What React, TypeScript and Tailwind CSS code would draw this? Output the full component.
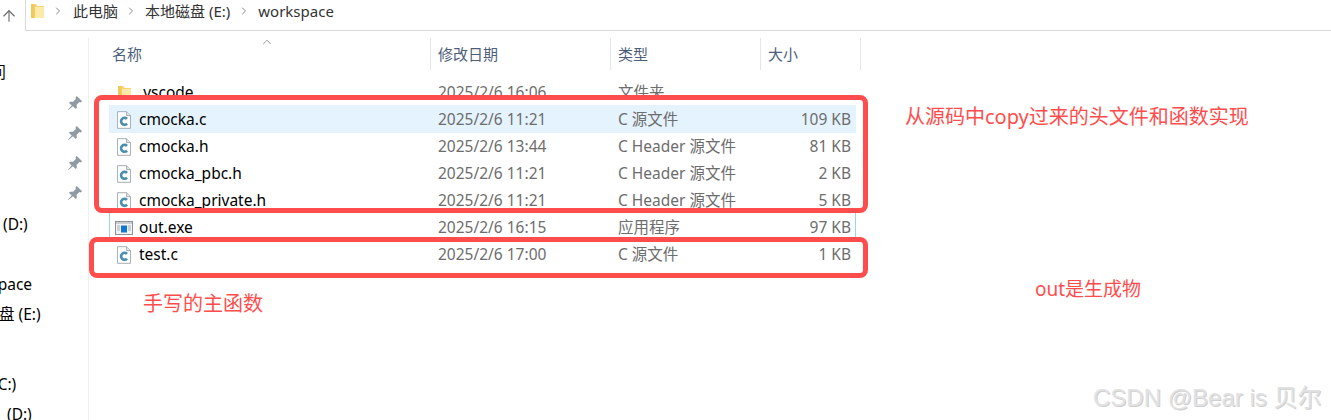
import React from 'react';
import { ArrowUp, ChevronRight, ChevronUp } from 'lucide-react';

const FolderIcon = () => (
    <svg width="13" height="16" viewBox="0 0 13 16">
        <path d="M0 1h5l1.5 2H13v12H0z" fill="#f6d574" />
        <path d="M4 4h9v11H4z" fill="#fde9a8" />
        <path d="M0 1h3.5v14H0z" fill="#f0c95c" />
    </svg>
);

const CFileIcon = () => (
    <svg width="14" height="18" viewBox="0 0 16 20">
        <path d="M0.5 0.5h10.5l4.5 4.5v14.500h-15z" fill="#fff" stroke="#9aa2a8" />
        <path d="M11 0.5v4.500h4.500" fill="#e8eaec" stroke="#9aa2a8" />
        <path d="M11.500 8.700a4 4 0 1 0 0 5.600" fill="none" stroke="#4a8fb0" strokeWidth="3" />
    </svg>
);

const ExeIcon = () => (
    <svg width="18" height="14" viewBox="0 0 18 14">
        <rect x="0.5" y="0.5" width="17" height="13" fill="#f4f4f4" stroke="#8b9299" />
        <rect x="1" y="1" width="16" height="2" fill="#c9ced3" />
        <rect x="6" y="4.5" width="6" height="7" fill="#0f78d4" />
        <path d="M2 5h3M2 7h3M2 9h3M13 5h3M13 7h3M13 9h3" stroke="#a9aeb3" />
    </svg>
);

const PinIcon = () => (
    <svg width="16" height="16" viewBox="0 0 14 14">
        <path d="M8.5 0.8l4.7 4.7-1.3 1-1-.4-2.5 2.5.2 2.6-1 1-2.4-2.4L1.200 13.200 0.800 12.800l3.300-3.600L1.700 6.800l1-1 2.600.2 2.500-2.500-.4-1z" fill="#8f9aa3" />
    </svg>
);

const files = [
    { name: '.vscode', date: '2025/2/6 16:06', type: '文件夹', size: '', icon: 'folder' },
    { name: 'cmocka.c', date: '2025/2/6 11:21', type: 'C 源文件', size: '109 KB', icon: 'c', selected: true },
    { name: 'cmocka.h', date: '2025/2/6 13:44', type: 'C Header 源文件', size: '81 KB', icon: 'c' },
    { name: 'cmocka_pbc.h', date: '2025/2/6 11:21', type: 'C Header 源文件', size: '2 KB', icon: 'c' },
    { name: 'cmocka_private.h', date: '2025/2/6 11:21', type: 'C Header 源文件', size: '5 KB', icon: 'c' },
    { name: 'out.exe', date: '2025/2/6 16:15', type: '应用程序', size: '97 KB', icon: 'exe', focused: true },
    { name: 'test.c', date: '2025/2/6 17:00', type: 'C 源文件', size: '1 KB', icon: 'c' }
];

const App: React.FC = () => {
    return (
        <div className="relative w-[1331px] h-[420px] overflow-hidden bg-white text-[15.5px] font-['Noto_Sans','Noto_Sans_CJK_SC',sans-serif]">
            {/* Address bar */}
            <div className="flex h-[31px]">
                <div className="w-[25px] flex justify-center items-center pr-[7px] pt-[1px]">
                    <ArrowUp size={20} strokeWidth={1.5} className="text-[#6b6b6b]" />
                </div>
                <div className="flex-1 flex items-center border-l border-b border-[#d9d9d9] pl-[5px] pb-[8px] text-[#333] text-[15px]">
                    <FolderIcon />
                    <ChevronRight size={12} strokeWidth={2} className="ml-[8px] text-[#8a8a8a]" />
                    <span className="ml-[9px]">此电脑</span>
                    <ChevronRight size={12} strokeWidth={2} className="ml-[7px] text-[#8a8a8a]" />
                    <span className="ml-[8px]">本地磁盘 (E:)</span>
                    <ChevronRight size={12} strokeWidth={2} className="ml-[8px] text-[#8a8a8a]" />
                    <span className="ml-[8px]">workspace</span>
                </div>
            </div>

            <div className="flex h-[389px] pt-[7px]">
                {/* Navigation pane */}
                <div className="w-[89px] shrink-0 border-r border-[#f0f0f0] overflow-hidden relative text-black">
                    <div className="h-[20px]" />
                    <div className="h-[30px] flex items-center -ml-[25px] whitespace-nowrap">访问</div>
                    <div className="h-[30px] flex items-center justify-end pr-[5px]"><PinIcon /></div>
                    <div className="h-[30px] flex items-center justify-end pr-[5px]"><PinIcon /></div>
                    <div className="h-[30px] flex items-center justify-end pr-[5px]"><PinIcon /></div>
                    <div className="h-[30px] flex items-center justify-end pr-[5px]"><PinIcon /></div>
                    <div className="h-[2px]" />
                    <div className="h-[30px] flex items-center pl-[3px]">(D:)</div>
                    <div className="h-[30px]" />
                    <div className="h-[30px] flex items-center -ml-[46px] whitespace-nowrap">workspace</div>
                    <div className="h-[30px] flex items-center -ml-[1px] whitespace-nowrap">盘 (E:)</div>
                    <div className="h-[40px]" />
                    <div className="h-[30px] flex items-center -ml-[7px] whitespace-nowrap">(C:)</div>
                    <div className="h-[30px] flex items-center pl-[7px] whitespace-nowrap">(D:)</div>
                </div>

                {/* File list */}
                <div className="flex-1 pl-[20px]">
                    <div className="relative grid grid-cols-[322px_180px_150px_100px] h-[32px] text-[#4c607a] text-[15px]">
                        <div className="flex items-center pl-[3px] border-r border-[#e5e5e5]">名称</div>
                        <div className="flex items-center pl-[7px] border-r border-[#e5e5e5]">修改日期</div>
                        <div className="flex items-center pl-[7px] border-r border-[#e5e5e5]">类型</div>
                        <div className="flex items-center pl-[7px] border-r border-[#e5e5e5]">大小</div>
                        <ChevronUp size={14} strokeWidth={1.3} className="absolute left-[151px] -top-[3px] text-[#777]" />
                    </div>
                    <div className="h-[8px]" />
                    {files.map((file) => (
                        <div
                            key={file.name}
                            className={`grid grid-cols-[321px_180px_150px_96px] w-[747px] items-center pt-[2px] ${file.selected ? 'h-[28px] -mb-[1px] bg-[#e5f3ff]' : 'h-[27px]'} ${file.focused ? 'shadow-[inset_1px_0_0_#99d1ff,inset_-1px_0_0_#99d1ff]' : ''}`}
                        >
                            <div className="flex items-center text-black">
                                <span className="w-[30px] flex justify-center">
                                    {file.icon === 'folder' && <FolderIcon />}
                                    {file.icon === 'c' && <CFileIcon />}
                                    {file.icon === 'exe' && <ExeIcon />}
                                </span>
                                <span>{file.name}</span>
                            </div>
                            <div className="pl-[8px] text-[#6d6d6d]">{file.date}</div>
                            <div className="pl-[8px] text-[#6d6d6d]">{file.type}</div>
                            <div className="pr-[5px] text-right text-[#6d6d6d]">{file.size}</div>
                        </div>
                    ))}
                </div>
            </div>

            {/* Annotations drawn over the screenshot */}
            <div className="absolute left-[94px] top-[95px] w-[774px] h-[118px] border-[5px] border-[#ff4d4d] rounded-[8px]" />
            <div className="absolute left-[89px] top-[237px] w-[779px] h-[41px] border-[5px] border-[#ff4d4d] rounded-[8px]" />
            <div className="absolute left-[905px] top-[103px] text-[20px] leading-[28px] text-[#ff4d4d] whitespace-nowrap">从源码中copy过来的头文件和函数实现</div>
            <div className="absolute left-[1035px] top-[275px] text-[19px] leading-[28px] text-[#ff4d4d] whitespace-nowrap">out是生成物</div>
            <div className="absolute left-[143px] top-[290px] text-[20px] leading-[28px] text-[#ff4d4d] whitespace-nowrap">手写的主函数</div>
            <div className="absolute left-[1093px] top-[382px] text-[24px] leading-[32px] text-[#e2e2e2] font-['Liberation_Sans','Noto_Sans_CJK_SC',sans-serif] [text-shadow:1px_1px_0_#cfcfcf] whitespace-nowrap">CSDN @Bear is 贝尔</div>
        </div>
    );
};

export default App;
